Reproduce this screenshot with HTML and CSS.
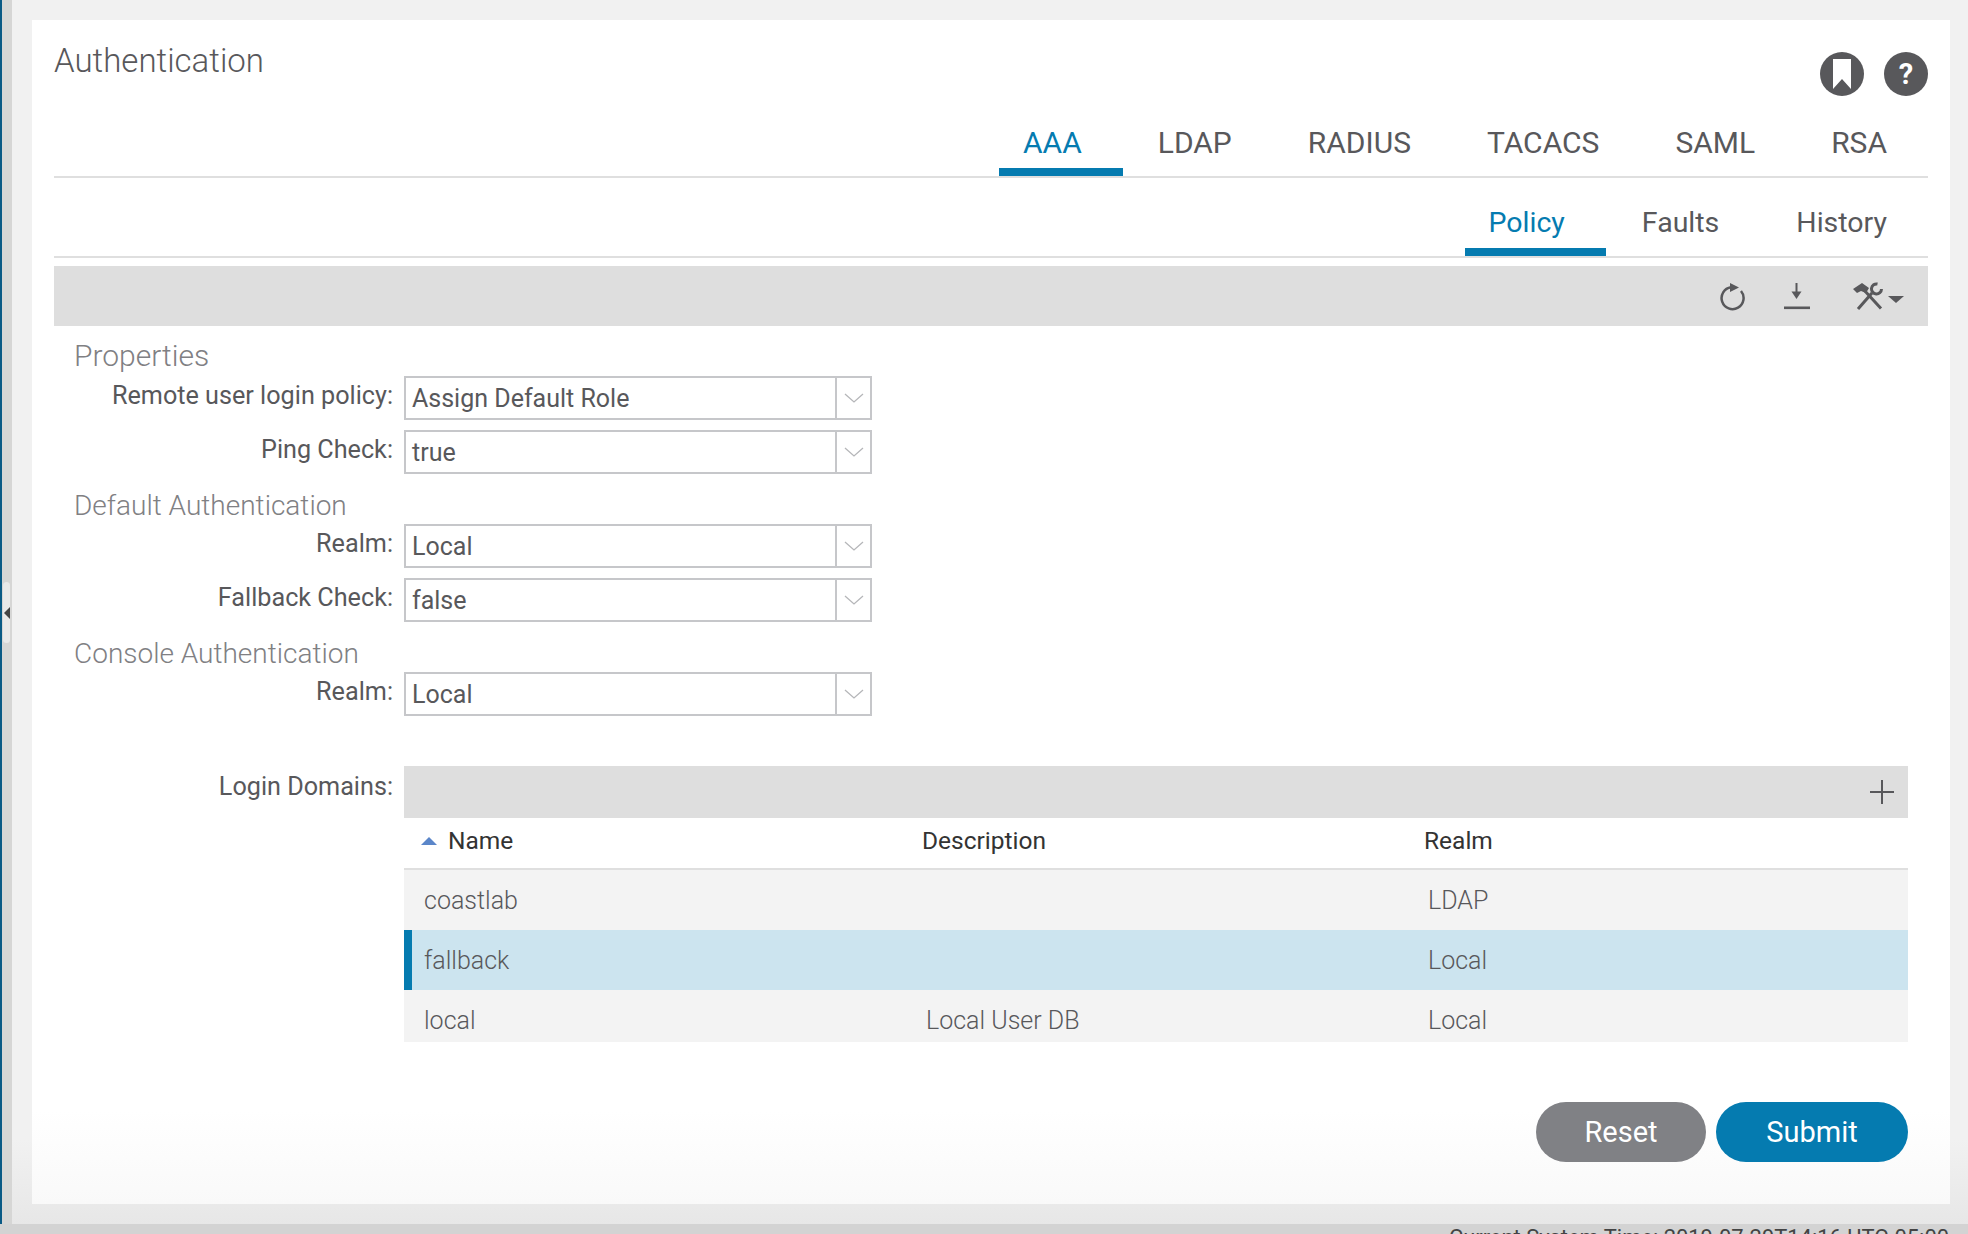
FILE: index.html
```html
<!DOCTYPE html>
<html lang='en'>

<head>
    <meta charset='UTF-8'>
    <title>Authentication</title>
    <link rel="stylesheet" href="styles.css">
</head>

<body>
    <div id="shell">
        <div id="side-rail">
            <div id="rail-handle"><div id="rail-arrow"></div></div>
        </div>
        <div id="main">
            <div id="card">
                <div id="title-row">
                    <h1>Authentication</h1>
                    <div id="title-icons">
                        <button class="round-btn">
                            <svg width="18" height="30" viewBox="0 0 18 30"><path d="M0 0H18V30L9 20L0 30Z" fill="#fff"/></svg>
                        </button>
                        <button class="round-btn help-text">?</button>
                    </div>
                </div>

                <div class="tabs">
                    <div class="tab active">AAA</div>
                    <div class="tab">LDAP</div>
                    <div class="tab">RADIUS</div>
                    <div class="tab">TACACS</div>
                    <div class="tab">SAML</div>
                    <div class="tab">RSA</div>
                </div>
                <div class="tabs subtabs">
                    <div class="tab active">Policy</div>
                    <div class="tab">Faults</div>
                    <div class="tab">History</div>
                </div>

                <div id="toolbar">
                    <svg class="tool refresh" width="26" height="28" viewBox="0 0 26 28">
                        <path d="M11 4.2A11 11 0 1 0 21 8" fill="none" stroke="#58585b" stroke-width="2.5"/>
                        <path d="M10 0L19 4.5L10 9Z" fill="#58585b"/>
                    </svg>
                    <svg class="tool download" width="26" height="27" viewBox="0 0 26 27">
                        <path d="M12.5 0V9" stroke="#58585b" stroke-width="2" fill="none"/>
                        <path d="M7.5 8.5H17.5L12.5 16Z" fill="#58585b"/>
                        <path d="M0 24.8H26" stroke="#58585b" stroke-width="2.6" fill="none"/>
                    </svg>
                    <svg class="tool tools" width="32" height="28" viewBox="0 0 32 28">
                        <path d="M0 7L9 1L16 6L13 11L8 9L4 11Z" fill="#58585b"/>
                        <path d="M11 8L28 26.5M5 27L19 11" stroke="#58585b" stroke-width="3" fill="none"/>
                        <path d="M24.5 2A5 5 0 1 0 28.5 7" fill="none" stroke="#58585b" stroke-width="3"/>
                    </svg>
                    <div id="tools-caret"></div>
                </div>

                <h2 class="section first">Properties</h2>
                <div class="form-row">
                    <label>Remote user login policy:</label>
                    <div class="select"><span>Assign Default Role</span><div class="select-arrow"><svg width="20" height="10" viewBox="0 0 20 10"><path d="M1 1L10 9L19 1" fill="none" stroke="#b5b6b9" stroke-width="1.3"/></svg></div></div>
                </div>
                <div class="form-row">
                    <label>Ping Check:</label>
                    <div class="select"><span>true</span><div class="select-arrow"><svg width="20" height="10" viewBox="0 0 20 10"><path d="M1 1L10 9L19 1" fill="none" stroke="#b5b6b9" stroke-width="1.3"/></svg></div></div>
                </div>

                <h2 class="section">Default Authentication</h2>
                <div class="form-row">
                    <label>Realm:</label>
                    <div class="select"><span>Local</span><div class="select-arrow"><svg width="20" height="10" viewBox="0 0 20 10"><path d="M1 1L10 9L19 1" fill="none" stroke="#b5b6b9" stroke-width="1.3"/></svg></div></div>
                </div>
                <div class="form-row">
                    <label>Fallback Check:</label>
                    <div class="select"><span>false</span><div class="select-arrow"><svg width="20" height="10" viewBox="0 0 20 10"><path d="M1 1L10 9L19 1" fill="none" stroke="#b5b6b9" stroke-width="1.3"/></svg></div></div>
                </div>

                <h2 class="section">Console Authentication</h2>
                <div class="form-row">
                    <label>Realm:</label>
                    <div class="select"><span>Local</span><div class="select-arrow"><svg width="20" height="10" viewBox="0 0 20 10"><path d="M1 1L10 9L19 1" fill="none" stroke="#b5b6b9" stroke-width="1.3"/></svg></div></div>
                </div>

                <div id="domains">
                    <label>Login Domains:</label>
                    <div id="domains-table">
                        <div id="table-bar">
                            <svg width="26" height="26" viewBox="0 0 26 26"><path d="M13 1V25M1 13H25" stroke="#58585b" stroke-width="2" fill="none"/></svg>
                        </div>
                        <div class="table-row table-head">
                            <div class="cell name-head"><div id="sort-arrow"></div>Name</div>
                            <div class="cell">Description</div>
                            <div class="cell">Realm</div>
                        </div>
                        <div class="table-row data-row">
                            <div class="cell">coastlab</div>
                            <div class="cell"></div>
                            <div class="cell">LDAP</div>
                        </div>
                        <div class="table-row data-row selected">
                            <div class="cell">fallback</div>
                            <div class="cell"></div>
                            <div class="cell">Local</div>
                        </div>
                        <div class="table-row data-row last-row">
                            <div class="cell">local</div>
                            <div class="cell">Local User DB</div>
                            <div class="cell">Local</div>
                        </div>
                    </div>
                </div>

                <div id="actions">
                    <button class="pill reset">Reset</button>
                    <button class="pill submit">Submit</button>
                </div>
            </div>
        </div>
    </div>
    <div id="footer"><span>Current System Time: 2019-07-29T14:16 UTC-05:00</span></div>
</body>

</html>
```

FILE: styles.css
```css
html,
body {
    margin: 0;
    height: 100%;
    overflow: hidden;
}

body {
    font-family: Roboto, "Liberation Sans", sans-serif;
    font-size: 25px;
    color: #58585b;
    background: linear-gradient(#f1f1f1 1140px, #e7e7e7 1224px);
    display: flex;
    flex-direction: column;
}

#shell {
    display: flex;
    height: 1224px;
}

#side-rail {
    width: 10px;
    border-left: 2px solid #0a5a85;
    background-color: #d6d6d5;
    display: flex;
    align-items: flex-start;
}

#rail-handle {
    width: 7px;
    height: 61px;
    margin: 582px 0 0 1px;
    border-radius: 4px;
    background-color: #e9e9e9;
    display: flex;
    align-items: center;
}

#rail-arrow {
    width: 0;
    height: 0;
    margin-left: 1px;
    border-top: 6px solid transparent;
    border-bottom: 6px solid transparent;
    border-right: 6px solid #444;
}

#main {
    flex: 1;
    padding: 20px 18px 20px 20px;
}

#card {
    height: 1184px;
    box-sizing: border-box;
    padding: 0 22px;
    background: linear-gradient(#fff 1090px, #f9f9f9 1184px);
}

#title-row {
    height: 102px;
    display: flex;
    justify-content: space-between;
    align-items: flex-start;
}

h1 {
    margin: 22px 0 0;
    font-size: 33px;
    line-height: 38px;
    font-weight: 300;
    color: #58585b;
}

#title-icons {
    display: flex;
    gap: 20px;
    margin-top: 32px;
}

.round-btn {
    width: 44px;
    height: 44px;
    padding: 0;
    border: none;
    border-radius: 50%;
    background-color: #58585b;
    display: flex;
    align-items: center;
    justify-content: center;
}

.help-text {
    color: #fff;
    font-family: Roboto, sans-serif;
    font-size: 29px;
    font-weight: 700;
}

.tabs {
    height: 54px;
    display: flex;
    justify-content: flex-end;
    border-bottom: 2px solid #dfdfdf;
}

.subtabs {
    height: 78px;
}

.tab {
    margin-left: 11px;
    padding: 3px 41px 0 24px;
    font-size: 30px;
    line-height: 36px;
    border-bottom: 8px solid transparent;
    box-sizing: border-box;
    display: flex;
    align-items: flex-start;
}

.subtabs .tab {
    margin-left: 12px;
    padding-top: 27px;
    font-size: 28.5px;
}

.tab.active {
    color: #057bb0;
    border-bottom-color: #057bb0;
}

#toolbar {
    margin-top: 8px;
    height: 60px;
    padding-right: 24px;
    background-color: #dedede;
    display: flex;
    justify-content: flex-end;
    align-items: flex-start;
}

.refresh {
    margin: 17px 38px 0 0;
}

.download {
    margin: 17px 43px 0 0;
}

.tools {
    margin: 16px 3px 0 0;
}

#tools-caret {
    width: 0;
    height: 0;
    margin-top: 30px;
    border-left: 8px solid transparent;
    border-right: 8px solid transparent;
    border-top: 7px solid #58585b;
}

.section {
    margin: 0;
    height: 50px;
    box-sizing: border-box;
    padding: 17px 0 0 20px;
    font-size: 28px;
    line-height: 30px;
    font-weight: 300;
    color: #808083;
}

.section.first {
    padding-top: 15px;
    font-size: 30px;
}

.form-row {
    display: flex;
    height: 44px;
}

.form-row + .form-row {
    margin-top: 10px;
}

label {
    width: 339px;
    margin-right: 11px;
    text-align: right;
    font-size: 25.2px;
    line-height: 39px;
    flex-shrink: 0;
}

.select {
    width: 468px;
    box-sizing: border-box;
    border: 2px solid #c6c7ca;
    display: flex;
    justify-content: space-between;
    line-height: 42px;
}

.select span {
    padding-left: 6px;
}

.select-arrow {
    width: 33px;
    border-left: 2px solid #c6c7ca;
    display: flex;
    align-items: center;
    justify-content: center;
}

#domains {
    display: flex;
    margin: 50px 20px 0 0;
}

#domains label {
    line-height: 41px;
}

#domains-table {
    flex: 1;
}

#table-bar {
    height: 52px;
    padding-right: 13px;
    background-color: #dedede;
    display: flex;
    justify-content: flex-end;
    align-items: center;
}

.table-row {
    display: grid;
    grid-template-columns: 518px 502px 1fr;
}

.table-head {
    height: 52px;
    box-sizing: border-box;
    border-bottom: 2px solid #dfdfdf;
    color: #333;
    font-size: 24.5px;
    line-height: 46px;
}

.name-head {
    padding-left: 17px;
    display: flex;
    align-items: center;
    height: 46px;
}

#sort-arrow {
    width: 0;
    height: 0;
    margin-right: 11px;
    border-left: 8px solid transparent;
    border-right: 8px solid transparent;
    border-bottom: 8px solid #5b86c9;
}

.data-row {
    height: 60px;
    box-sizing: border-box;
    padding-left: 20px;
    grid-template-columns: 502px 502px 1fr;
    background-color: #f3f3f3;
    font-weight: 300;
    line-height: 62px;
}

.data-row.selected {
    padding-left: 12px;
    border-left: 8px solid #057bb0;
    background-color: #cce4ef;
}

.data-row.last-row {
    height: 52px;
    line-height: 62px;
}

#actions {
    margin: 60px 20px 0 0;
    display: flex;
    justify-content: flex-end;
    gap: 10px;
}

.pill {
    height: 60px;
    padding: 0;
    border: none;
    border-radius: 30px;
    color: #fff;
    font-family: inherit;
    font-size: 29px;
}

.reset {
    width: 170px;
    background-color: #808185;
}

.submit {
    width: 192px;
    background-color: #057bb0;
}

#footer {
    height: 10px;
    overflow: hidden;
    background-color: #d3d3d3;
    display: flex;
    justify-content: flex-end;
    padding-right: 19px;
}

#footer span {
    font-size: 21.9px;
    line-height: 28px;
    white-space: nowrap;
    color: #444;
}
```
